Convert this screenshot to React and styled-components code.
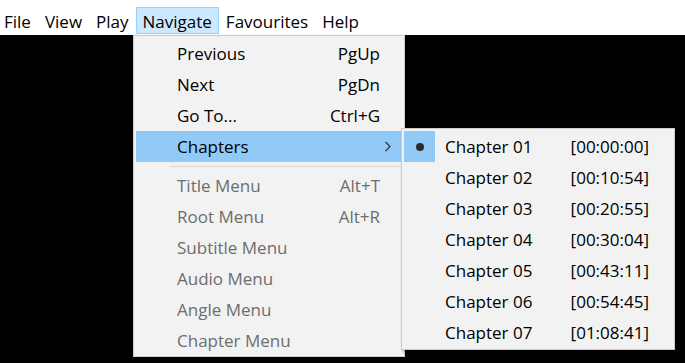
import React from 'react';
import styled, { createGlobalStyle } from 'styled-components';

const Global = createGlobalStyle`
  html, body {
    margin: 0;
    padding: 0;
    background: #000;
  }
  body {
    font-family: "Open Sans", "Noto Sans", sans-serif;
    font-size: 17px;
    color: #000;
  }
`;

const Screen = styled.div`
  position: relative;
  width: 685px;
  height: 363px;
  background: #000;
  overflow: hidden;
`;

const MenuBar = styled.div`
  display: flex;
  align-items: flex-end;
  height: 35px;
  padding: 0 0 1px;
  margin-left: -3px;
  background: #fff;
  box-sizing: border-box;
`;

const BarItem = styled.div`
  position: relative;
  height: 27px;
  line-height: 27px;
  padding: 0 6px;
  border: 1px solid ${p => (p.$open ? '#99d1ff' : 'transparent')};
  background: ${p => (p.$open ? '#cce8ff' : 'transparent')};
  box-sizing: border-box;
`;

const Dropdown = styled.div`
  position: absolute;
  top: 35px;
  left: 133px;
  width: 272px;
  padding: 2px 2px 0;
  background: #f2f2f2;
  border: 1px solid #cccccc;
  box-shadow: 2px 2px 3px rgba(0, 0, 0, 0.35);
  box-sizing: border-box;
`;

const SubMenu = styled.div`
  position: absolute;
  top: 128px;
  left: 401px;
  width: 274px;
  padding: 2px 1px 1px;
  background: #f2f2f2;
  border: 1px solid #cccccc;
  box-shadow: 2px 2px 3px rgba(0, 0, 0, 0.35);
  box-sizing: border-box;
`;

const Row = styled.div`
  display: flex;
  align-items: center;
  height: 31px;
  padding: 0 20px 0 41px;
  color: ${p => (p.$disabled ? '#6d6d6d' : '#000')};
  background: ${p => (p.$active ? '#91c9f7' : 'transparent')};
  white-space: nowrap;
`;

const Label = styled.span`
  flex: 1;
`;

const Shortcut = styled.span`
  padding-right: 2px;
`;

const Arrow = styled.svg`
  width: 8px;
  height: 11px;
  margin-right: -10px;
  margin-left: 2px;
`;

const Separator = styled.div`
  height: 8px;
  display: flex;
  align-items: center;
  padding-left: 34px;

  &::after {
    content: "";
    flex: 1;
    height: 1px;
    background: #d7d7d7;
  }
`;

const ChapterRow = styled.div`
  display: flex;
  align-items: center;
  height: 31px;
  padding-right: 24px;
  white-space: nowrap;
`;

const Check = styled.div`
  width: 31px;
  height: 31px;
  margin-left: 1px;
  display: flex;
  align-items: center;
  justify-content: center;
  background: ${p => (p.$on ? '#91c9f7' : 'transparent')};

  &::after {
    content: "";
    display: ${p => (p.$on ? 'block' : 'none')};
    width: 8px;
    height: 8px;
    border-radius: 50%;
    background: #2b2b2b;
  }
`;

const ChapterName = styled.span`
  flex: 1;
  padding-left: 10px;
`;

const menus = ['File', 'View', 'Play', 'Navigate', 'Favourites', 'Help'];

const chapters = [
  ['Chapter 01', '[00:00:00]'],
  ['Chapter 02', '[00:10:54]'],
  ['Chapter 03', '[00:20:55]'],
  ['Chapter 04', '[00:30:04]'],
  ['Chapter 05', '[00:43:11]'],
  ['Chapter 06', '[00:54:45]'],
  ['Chapter 07', '[01:08:41]'],
];

export default function App() {
  return (
    <Screen>
      <Global />
      <MenuBar>
        {menus.map(m => (
          <BarItem key={m} $open={m === 'Navigate'}>{m}</BarItem>
        ))}
      </MenuBar>

      <Dropdown>
        <Row><Label>Previous</Label><Shortcut>PgUp</Shortcut></Row>
        <Row><Label>Next</Label><Shortcut>PgDn</Shortcut></Row>
        <Row><Label>Go To...</Label><Shortcut>Ctrl+G</Shortcut></Row>
        <Row $active>
          <Label>Chapters</Label>
          <Arrow viewBox="0 0 8 11">
            <path d="M1.5 1 L6 5.5 L1.5 10" fill="none" stroke="#333" strokeWidth="1.2" />
          </Arrow>
        </Row>
        <Separator />
        <Row $disabled><Label>Title Menu</Label><Shortcut>Alt+T</Shortcut></Row>
        <Row $disabled><Label>Root Menu</Label><Shortcut>Alt+R</Shortcut></Row>
        <Row $disabled><Label>Subtitle Menu</Label></Row>
        <Row $disabled><Label>Audio Menu</Label></Row>
        <Row $disabled><Label>Angle Menu</Label></Row>
        <Row $disabled><Label>Chapter Menu</Label></Row>
      </Dropdown>

      <SubMenu>
        {chapters.map(([name, time], i) => (
          <ChapterRow key={name}>
            <Check $on={i === 0} />
            <ChapterName>{name}</ChapterName>
            <span>{time}</span>
          </ChapterRow>
        ))}
      </SubMenu>
    </Screen>
  );
}
